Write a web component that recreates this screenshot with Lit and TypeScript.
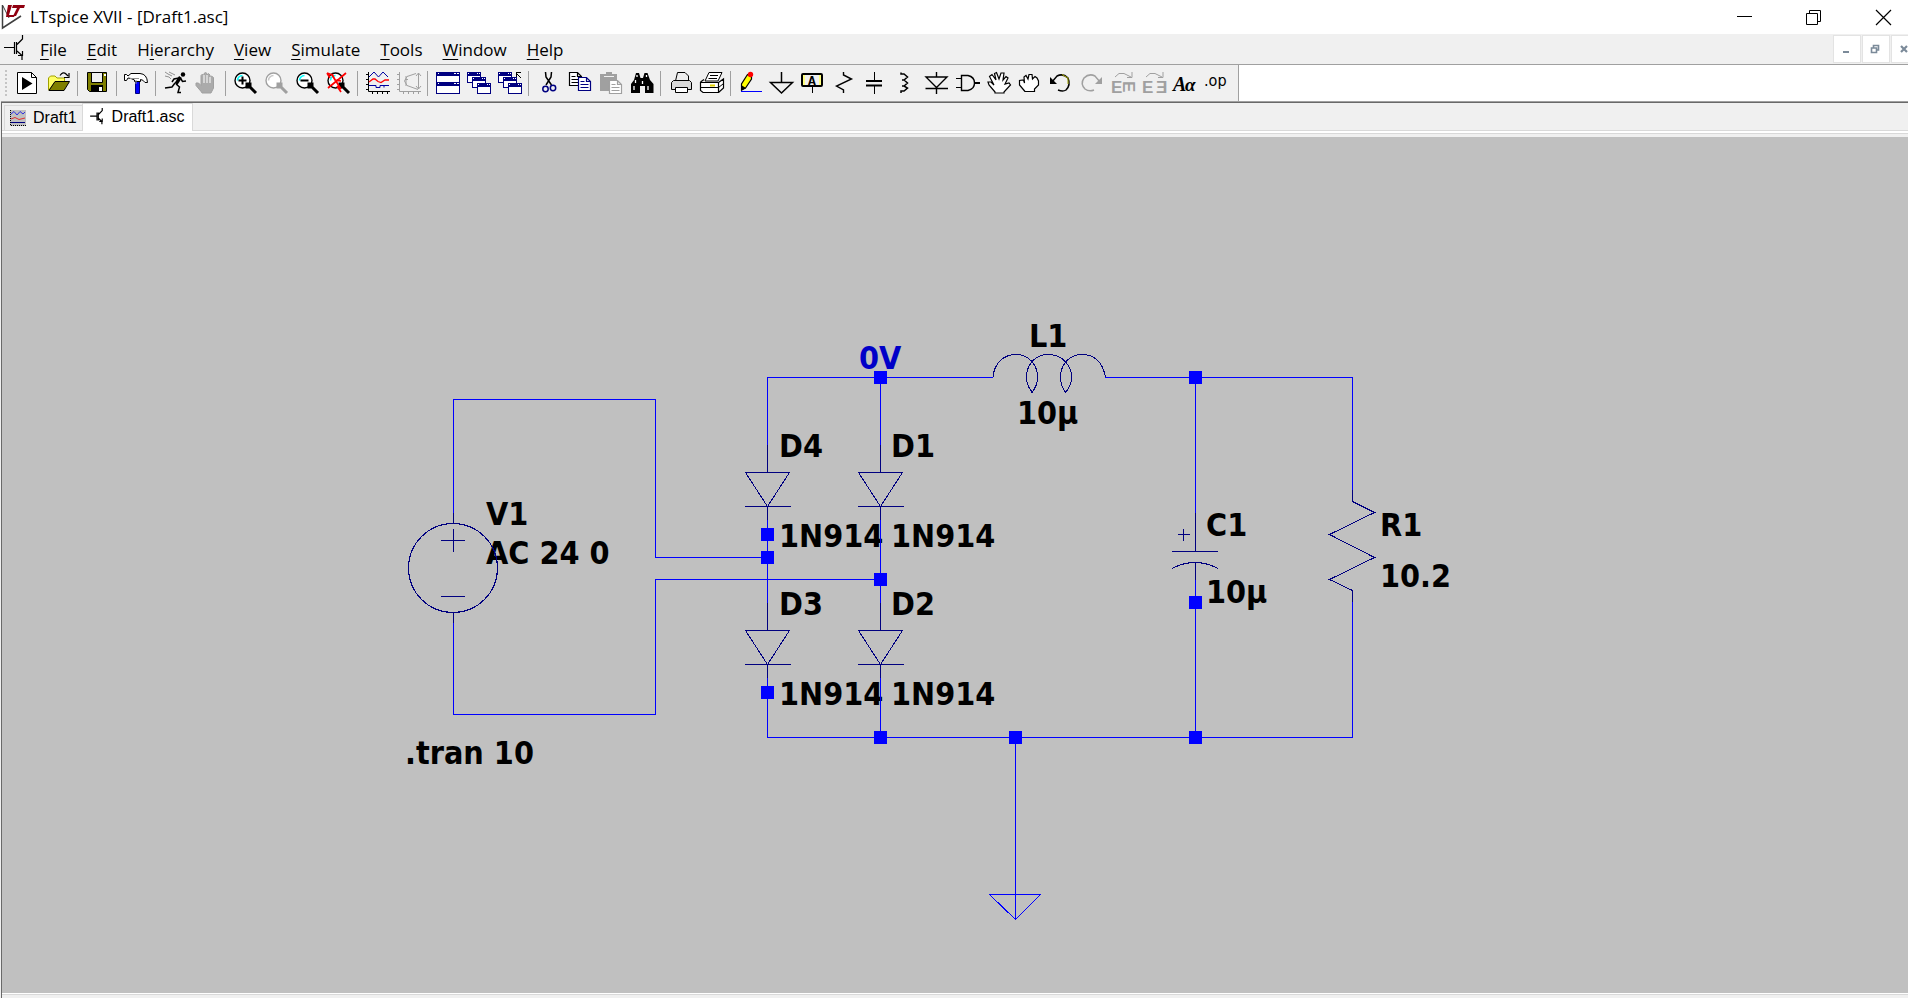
import { LitElement, html, svg, css } from "lit";
import { customElement } from "lit/decorators.js";
import { classMap } from "lit/directives/class-map.js";

type Tool = { label: string; art: unknown; disabled?: boolean };

const lens = (color: string, glint: string, inner: unknown) => svg`
  <circle cx="8.5" cy="8.5" r="7.5" fill="#fff" stroke="${color}" stroke-width="1.4"/>
  <path d="M3.5 8.5A5 5 0 0 1 8.5 3.5" fill="none" stroke="${glint}" stroke-width="1.6"/>
  <path d="M13 12H16V15H13Z M15 14L22 21" fill="none" stroke="${color}" stroke-width="3"/>
  ${inner}`;

const cascade = (extra: unknown) => svg`
  ${[[1, 1], [6, 6], [11, 12]].map(([x, y]) => svg`
    <rect x="${x - 0.5}" y="${y - 0.5}" width="13" height="10" fill="#fff" stroke="#000080"/>
    <rect x="${x}" y="${y}" width="12" height="3" fill="#000080"/>
    <path d="M${x} ${y + 0.5}h1M${x + 9} ${y + 0.5}h1M${x + 11} ${y + 0.5}h1" stroke="#fff"/>`)}
  ${extra}`;

const sheet = (x: number, y: number, color: string) => svg`
  <path d="M${x} ${y}h8l4 4v9h-12z M${x + 8} ${y}v4h4" fill="#fff" stroke="${color}" stroke-width="1.2"/>
  <path d="M${x + 2} ${y + 4}h4M${x + 2} ${y + 7}h8M${x + 2} ${y + 10}h8" stroke="${color}"/>`;

const groups: Tool[][] = [
  [
    { label: "New schematic", art: svg`
      <path d="M1.5 .5H15.5L20.5 5.5V21.5H1.5Z" fill="#fff" stroke="#000"/>
      <path d="M15.5 .5V5.5H20.5" fill="none" stroke="#000"/>
      <path d="M6 5V18L16.5 11.5Z"/>` },
    { label: "Open", art: svg`
      <path d="M1.5 18V6L3.5 4H8L10 6H17.5V10H8L2 18Z" fill="#ffff66" stroke="#a0a000"/>
      <path d="M8 9.5H22.5L17 18.5H2Z" fill="#808000" stroke="#000"/>
      <path d="M13 3.5Q16 -1 19 2L21 4M22 1V5.5H17" fill="none" stroke="#000" stroke-width="1.2"/>` },
  ],
  [{ label: "Save", art: svg`
      <path d="M1.5 .5H20.5V19.5H3.5L1.5 17.5Z" fill="#808000" stroke="#000"/>
      <path d="M5.500 .5H16.500V10.500H5.500Z" fill="#f0f0f0" stroke="#000"/>
      <path d="M5 13H17V20H5Z"/><path d="M13 15H16V19H13Z" fill="#fff"/>
      <path d="M18 2H20V4H18Z" fill="#fff"/>` }],
  [{ label: "Control panel", art: svg`
      <path d="M10.500 8V21.500H14.500V8Z" fill="#0000ff" stroke="#000080"/>
      <path d="M-.5 2.500H1.500L3 4L6 1.500H15Q22 2 22.500 10.500L20 10.500Q18 7.500 15.500 7.500V9.500H9.500V8L6 6.500L3 6L1.500 8.500H-.5Z" fill="#fff" stroke="#000"/>
      <path d="M5 6.500H14M11 8V12" stroke="#909090"/>` }],
  [
    { label: "Run", art: svg`
      <circle cx="19" cy="2.500" r="2.200"/>
      <path d="M16.500 5L12 12" stroke="#000" stroke-width="3.400"/>
      <path d="M15 6L10 7L8 10M17 7L18.500 9.500L22 9M11 11L8 15L1 16M12 12L15.500 15L14 20.500H17" fill="none" stroke="#000" stroke-width="1.500"/>
      <path d="M1 0L4 2L8 4M5 0L11 3M1 4L5 5L7 7" fill="none" stroke="#909090"/>` },
    { label: "Halt", disabled: true, art: svg`
      <path d="M6.500 20L1 13.500V11H3.500L6 13.500V3.500L7.500 2L9 3.500V1.500L10.500 .5L12 1.500V3L13.500 1.500L15 3V5.500L16.500 4L18.500 5.500V16L16 21H7Z" fill="#ababab" stroke="#a0a0a0"/>
      <path d="M9 3V11M12 3V11M15 5V11" stroke="#fff"/>` },
  ],
  [
    { label: "Zoom to rectangle", art: lens("#000", "#00ffff", svg`<path d="M4.500 8.500H12.500M8.500 4.500V12.500" stroke="#000" stroke-width="2"/>`) },
    { label: "Pan", disabled: true, art: lens("#a0a0a0", "#c8c8c8", "") },
    { label: "Zoom back", art: lens("#000", "#00ffff", svg`<path d="M4.500 8.500H12.500" stroke="#000" stroke-width="2"/>`) },
    { label: "Zoom full extents", art: lens("#000", "#00ffff", svg`<path d="M0 1L5 3L14 17M19 1L12 7L1 16M0 1L3 6M10 14L14 20M5 2L8 8L14 9" fill="none" stroke="#ff0000" stroke-width="1.700"/>`) },
  ],
  [
    { label: "Autorange", art: svg`
      <path d="M2.500 0V19.500H24M0 2.500H2M0 7.500H2M0 12.500H2M0 17.500H2M6.500 20V22M11.500 20V22M16.500 20V22M21.500 20V22" fill="none" stroke="#000"/>
      <path d="M3 5L8 0L12.500 5L17 0L22 5" fill="none" stroke="#0000a0"/>
      <path d="M3 10L7 7H9L12 9.500L15 10.500L19 8H23" fill="none" stroke="#ff0000" stroke-width="1.300"/>
      <path d="M3 13.500H10V15.500H14V13.500H18V15.500M18 13.500H23" fill="none" stroke="#0000a0"/>` },
    { label: "Smith chart", disabled: true, art: svg`
      <path d="M2.500 0V19.500H24M0 2.500H2M0 7.500H2M0 12.500H2M0 17.500H2M6.500 20V22M11.500 20V22M16.500 20V22M21.500 20V22" fill="none" stroke="#a0a0a0"/>
      <path d="M19 1.500L10 4.500L7.500 9L10 13.500L21 17.500M21.500 1V17M9 4V14M8 7.500H11M19 4L21.500 1L24 4M19 14L21.500 17L24 14" fill="none" stroke="#a0a0a0"/>` },
  ],
  [
    { label: "Tile windows", art: svg`
      ${[0, 10].map((y) => svg`
        <rect x=".5" y="${y + 0.5}" width="23" height="11" fill="#fff" stroke="#000080"/>
        <rect x="1" y="${y}" width="22" height="4" fill="#000080"/>
        <path d="M2 ${y + 1.5}h1M18 ${y + 1.5}h2M21 ${y + 1.5}h2" stroke="#fff"/>`)}` },
    { label: "Cascade windows", art: cascade("") },
    { label: "Close all windows", art: cascade(svg`<path d="M18 .5H23M18.500 0V5M18 1L23 6" stroke="#000" fill="none"/>`) },
  ],
  [
    { label: "Cut", art: svg`
      <path d="M8.500 0L9 5L14.500 13M14.500 0L14 5L9 13" fill="none" stroke="#000" stroke-width="1.500"/>
      <circle cx="8.500" cy="17" r="2.700" fill="none" stroke="#000080" stroke-width="1.500"/>
      <circle cx="16" cy="16" r="2.700" fill="none" stroke="#000080" stroke-width="1.500"/>` },
    { label: "Copy", art: svg`${sheet(1.5, 0.5, "#000")}${sheet(10.5, 5.5, "#000080")}` },
    { label: "Paste", disabled: true, art: svg`
      <path d="M1 2H7V0H13V2H18V19H1Z" fill="#a0a0a0"/><path d="M5 4.500H15" stroke="#f0f0f0"/>
      ${sheet(10.5, 8.5, "#a0a0a0")}` },
    { label: "Find", art: svg`
      <path d="M6 1H9L10.500 6H13L14.500 1H17.500L20 8L23.500 12V21H15V14H10V21H1V12L4 8Z"/>
      <path d="M7 3V5M16.500 3V5M5.500 8V11M12.500 9V12M4 14V18M18 14V18" stroke="#fff" stroke-width="1.300"/>` },
  ],
  [
    { label: "Print setup", art: svg`
      <path d="M6.500 9L8.500 .5H16L19.500 4V9" fill="#eee" stroke="#000"/>
      <path d="M2.500 10.500L4.500 8.500H20.500L22.500 10.500V17.500H2.500Z" fill="#d8d8d8" stroke="#000"/>
      <path d="M6.500 15.500H18.500V20.500H6.500Z" fill="#fff" stroke="#000"/>` },
    { label: "Print", art: svg`
      <path d="M5 9L9 .5H22L18 9Z" fill="#fff" stroke="#000"/>
      <path d="M10 3.500H18M8.500 6.500H17" stroke="#000"/>
      <path d="M.5 10L4 7.500M.5 10.500H18.500V20.500H3L.5 18.500ZM18.500 10.500L23.500 7V16L18.500 20.500" fill="#fff" stroke="#000" stroke-width="1.200"/>
      <path d="M1 15.500H18.500L23 12" fill="none" stroke="#000"/><path d="M10 13.500H15" stroke="#e0d000" stroke-width="2"/>` },
  ],
  [
    { label: "Wire", art: svg`
      <path d="M2.500 18V12L8.500 2.500L12.500 5V7L6.500 16Z" fill="#ffff00" stroke="#000" stroke-width="1.200"/>
      <path d="M2 13L7 16L2 19Z"/><circle cx="11.500" cy="2.500" r="2.700" fill="#ff0000"/>
      <path d="M2 19.500H23" stroke="#0000ff"/>` },
    { label: "Ground", art: svg`<path d="M11.500 0V11M.5 10.500H22.500L11.500 21Z" fill="none" stroke="#000" stroke-width="1.500"/>` },
    { label: "Label net", art: svg`
      <rect x="1" y="2" width="20" height="12" rx="1" fill="#ffff80" stroke="#000" stroke-width="2"/>
      <rect x="4" y="3" width="14" height="10" fill="#f0f0f0"/>
      <path d="M11.500 15V21" stroke="#000"/>
      <text class="mono" x="7" y="13" font-size="13">A</text>` },
    { label: "Resistor", art: svg`<path d="M11.500 0V3L19.500 7L4.500 14L11.500 18V21" fill="none" stroke="#000" stroke-width="1.400"/>` },
    { label: "Capacitor", art: svg`<path d="M11.500 0V9M11.500 13V22" stroke="#000"/><path d="M3 9H19M3 13.500H19" stroke="#000" stroke-width="2"/>` },
    { label: "Inductor", art: svg`<path d="M7 .5V2H10L13.500 5L10 8H8M10 8L13.500 11L10 14H8M10 14L13.500 16L10 19H7V21" fill="none" stroke="#000" stroke-width="1.500"/>` },
    { label: "Diode", art: svg`<path d="M11.500 0V5M11.500 16V22M1 5H22L11.500 15.500ZM.5 16.500H23" fill="none" stroke="#000" stroke-width="1.400"/>` },
    { label: "Component", art: svg`
      <path d="M5.500 3.500H12Q18.500 5 18.500 11Q18.500 17 12 18.500H5.500Z" fill="none" stroke="#000" stroke-width="1.400"/>
      <path d="M0 6.500H5M0 15.500H5" stroke="#000"/><path d="M18 11H24" stroke="#000" stroke-width="2"/>` },
    { label: "Move", art: svg`
      <path d="M8 20L2 13L1 10L4 10L7 13L2.500 4.500L5 2.500L9 8L7.500 1.500L9.500 .5L12 7L14 1L17 1L16 8L19 4.500L21 6L18 12L22 11L23.500 13L17 20V21H8Z" fill="#fff" stroke="#000" stroke-width="1.200"/>` },
    { label: "Drag", art: svg`
      <path d="M7 19.500L1.500 13V8.500L5.500 8L6.500 11L6 5L8 3.500L10 7L11 2.500H14L14.500 7L17 4.500L19 6L20.500 9V13L16.500 17V19.500Z" fill="#fff" stroke="#000" stroke-width="1.200"/>` },
    { label: "Undo", art: svg`
      <path d="M3 10L8 4Q14 1 19 6Q22 13 17 18Q14 20 9 18" fill="none" stroke="#000" stroke-width="1.500"/>
      <path d="M1 5V12H8Z"/><path d="M13 2.500L19 6V12" fill="none" stroke="#a0a000"/>` },
    { label: "Redo", disabled: true, art: svg`
      <path d="M20 10L15 4Q9 1 4 6Q0 12 5 17Q9 20 14 18" fill="none" stroke="#a0a0a0" stroke-width="1.500"/>
      <path d="M22 5V12H15Z" fill="#a0a0a0"/>` },
    { label: "Rotate", disabled: true, art: svg`
      <path d="M4 5L8 1.500H13L20 5M21 0V5.500H16" fill="none" stroke="#a0a0a0"/>
      <text class="mark" x="0" y="21" font-size="17">E</text>
      <text class="mark" font-size="17" transform="translate(12 9) rotate(90)">E</text>` },
    { label: "Mirror", disabled: true, art: svg`
      <path d="M4 5L8 1.500H13L20 5M21 0V5.500H16" fill="none" stroke="#a0a0a0"/>
      <text class="mark" x="0" y="21" font-size="17">E</text>
      <text class="mark" x="14" y="21" font-size="17">Ǝ</text>` },
    { label: "Text", art: svg`<text class="script" x="0" y="19" font-size="20">A</text><text class="script" x="12" y="19" font-size="19">α</text>` },
    { label: "SPICE directive", art: svg`<text class="directive" x="0" y="14" font-size="16">.op</text>` },
  ],
];

const menus: [string, string, string][] = [
  ["", "F", "ile"], ["", "E", "dit"], ["H", "i", "erarchy"], ["", "V", "iew"],
  ["", "S", "imulate"], ["", "T", "ools"], ["", "W", "indow"], ["", "H", "elp"],
];

const wires = [
  "M453.5 513V399.5H655.5V557.5H767.5",
  "M453.5 623V714.5H655.5V579.5H880.5",
  "M767.5 445V377.5H993M880.5 377V445M767.5 512V603M880.5 512V603",
  "M767.5 677V737.5H1352.5V602M880.5 677V737",
  "M1105 377.5H1352.5V490M1195.5 377V513M1195.5 580V737",
  "M1015.5 737V919M989.5 894.5H1040.5L1015.5 919.5Z",
];

const diode = (x: number, y: number) =>
  `M${x} ${y - 28}V${y}M${x} ${y + 34}V${y + 47}M${x - 22} ${y}H${x + 22}L${x} ${y + 34}ZM${x - 23} ${y + 34}H${x + 23}`;

const parts = [
  "M453.5 513V523M453.5 612V623M441 540.5H465M453.5 529V552M441 596.5H465",
  diode(767.5, 472.5), diode(880.5, 472.5), diode(767.5, 630.5), diode(880.5, 630.5),
  "M993 377.5C994 362 1005 354.500 1016 354.500C1030 354.500 1037.500 366 1037.500 377C1037.500 384 1035 389 1031.500 393",
  "M1033 393C1029 389 1026.500 384 1026.500 377C1026.500 366 1034 354.500 1048 354.500C1063 354.500 1071.500 366 1071.500 377C1071.500 384 1069 389 1065 393",
  "M1066 393C1063 389 1060.500 384 1060.500 377C1060.500 366 1068 354.500 1082 354.500C1094 354.500 1103 362 1105.500 377.500",
  "M1195.5 513V551M1172 551.5H1218M1172 568.5Q1195 556.500 1218 568.5M1195.5 563V580M1178 534.5H1190M1183.5 529V541",
  "M1352.5 490V501.5L1374.5 512.5L1329.5 534.5L1374.5 557.5L1329.5 579.5L1352.5 590.5V602",
];

const nodes = [
  [880, 377], [1195, 377], [767, 534], [767, 557], [880, 579], [1195, 602],
  [767, 692], [880, 737], [1015, 737], [1195, 737],
];

const labels: [number, number, string][] = [
  [486, 525, "V1"], [486, 564, "AC 24 0"], [405, 764, ".tran 10"],
  [779, 457, "D4"], [891, 457, "D1"], [779, 547, "1N914"], [891, 547, "1N914"],
  [779, 615, "D3"], [891, 615, "D2"], [779, 705, "1N914"], [891, 705, "1N914"],
  [1029, 347, "L1"], [1017, 424, "10µ"], [1206, 536, "C1"], [1206, 603, "10µ"],
  [1380, 536, "R1"], [1380, 587, "10.2"],
];

@customElement("lt-schematic")
export class LtSchematic extends LitElement {
  static styles = css`
    :host { display: flex; min-width: 0; background: #c0c0c0; }
    .sheet { flex: 1; display: block; width: 100%; height: 100%; }
    .label { font: bold 32px "DejaVu Sans Condensed", "Noto Sans", sans-serif; fill: #000; }
    .net { fill: #0000c8; }
    .wire { fill: none; stroke: #0000ff; }
    .part { fill: none; stroke: #000080; }
    .node { fill: #0000ff; }
  `;
  render() {
    return html`<svg class="sheet" role="img" aria-label="Bridge rectifier schematic">
      <g transform="translate(-2 -137)" shape-rendering="crispEdges">
        ${labels.map(([x, y, t]) => svg`<text class="label" x="${x}" y="${y}">${t}</text>`)}
        <text class="label net" x="859" y="369">0V</text>
        ${wires.map((d) => svg`<path class="wire" d="${d}"/>`)}
        ${parts.map((d) => svg`<path class="part" d="${d}"/>`)}
        <circle class="part" cx="453" cy="568" r="44.5"/>
        ${nodes.map(([x, y]) => svg`<rect class="node" x="${x - 6}" y="${y - 6}" width="13" height="13"/>`)}
      </g>
    </svg>`;
  }
}

const transistor = (weight: number) => svg`<path d="M0 12.500H10M10.500 7V19M12.500 7V19M13 9.500L17 5.500L18.500 4V0M13 16L18 20.500V25M14 20.500H18.500V16" fill="none" stroke="#000" stroke-width="${weight}"/>`;

@customElement("app-root")
export class AppRoot extends LitElement {
  static styles = css`
    :host {
      display: flex; flex-direction: column; height: 100vh; overflow: hidden;
      background: #f0f0f0; color: #000;
      font: 17px "Open Sans", "Noto Sans", sans-serif;
    }
    button { margin: 0; padding: 0; border: 0; background: none; color: inherit; font: inherit; }
    svg { display: block; overflow: visible; }
    .title { display: flex; height: 34px; background: #fff; align-items: center; }
    .logo { margin: 0 5px 0 2px; }
    .name { flex: 1; font-size: 17px; line-height: 34px; font-weight: normal; margin: 0; }
    .caption { width: 69px; height: 34px; display: grid; place-items: center; }
    .close { width: 48px; margin-left: 12px; padding-right: 2px; }
    .menu { display: flex; height: 30px; border-bottom: 1px solid #a0a0a0; }
    .menu-icon { margin: 1px 5px 0 4px; }
    .items { display: flex; flex: 1; }
    .item { padding: 0 10px; line-height: 31px; }
    .item u { text-underline-offset: 3px; text-decoration-thickness: 1px; }
    .mdi { display: flex; gap: 1px; margin-right: -11px; padding-top: 1px; }
    .mdi button { width: 28px; height: 28px; border: 1px solid #e3e3e3; background: #fff; display: grid; place-items: center; padding-right: 3px; }
    .toolbar { display: flex; height: 36px; background: #fff; }
    .tools { display: flex; background: #f0f0f0; border-right: 1px solid #a0a0a0; padding: 0 6px 0 5px; }
    .grip { width: 2px; margin: 5px 6px 5px 0; background: repeating-linear-gradient(#c4c4c4 0 2px, #f0f0f0 2px 4px); }
    .sep { width: 1px; height: 25px; margin: 6px 5px 0 2px; background: #a0a0a0; }
    .tool { width: 31px; height: 36px; padding: 2px 0 0 3px; }
    .mono { font-family: "Liberation Mono", monospace; font-weight: bold; }
    .directive { font-family: "DejaVu Sans Condensed", sans-serif; }
    .mark { font-family: "Liberation Sans", sans-serif; font-weight: bold; fill: #a0a0a0; }
    .script { font-family: "Liberation Serif", serif; font-weight: bold; font-style: italic; }
    .work { flex: 1; min-height: 0; display: flex; flex-direction: column; border-top: 1px solid #696969; border-left: 1px solid #696969; box-shadow: 0 -1px #a0a0a0; margin: 1px 0 0 1px; }
    .tabs { display: flex; align-items: flex-end; height: 28px; padding-left: 2px; border-bottom: 1px solid #d9d9d9; box-sizing: border-box; }
    .tab { display: flex; align-items: center; height: 25px; padding: 0 5px 0 5px; gap: 7px; border-top: 1px solid #d9d9d9; border-left: 1px solid #d9d9d9; font: 16px "Liberation Sans", sans-serif; }
    .tab.active { height: 28px; margin-bottom: -1px; padding: 0 7px 2px 7px; gap: 8px; background: #fff; border-right: 1px solid #d9d9d9; }
    .band { height: 2px; background: #fff; border-bottom: 1px solid #d9d9d9; margin-bottom: 3px; }
    .canvas { flex: 1; min-height: 0; }
    .foot { height: 3px; flex: none; border-top: 1px solid #fff; box-sizing: border-box; margin-bottom: 2px; background: linear-gradient(#d9d9d9 50%, #f0f0f0 50%); }
  `;

  render() {
    return html`
      <header class="title">
        <svg class="logo" width="23" height="28" viewBox="0 0 23 28">
          <path d="M.5 2V25L19 13" fill="none" stroke="#404040" stroke-width="1.500"/>
          <path d="M1 3L7 15" stroke="#404040"/>
          <path d="M6 2H10L7 12H13L12 14H4ZM11 2H23L22 5H18L14 13H11L15 5H10Z" fill="#900010"/>
        </svg>
        <h1 class="name">LTspice XVII - [Draft1.asc]</h1>
        <button class="caption" aria-label="Minimize"><svg width="15" height="15"><path d="M0 6.500H15" stroke="#000"/></svg></button>
        <button class="caption" aria-label="Restore"><svg width="15" height="15"><path d="M.5 3.500H11.500V14.500H.5ZM3.500 3V.5H14.500V11.500H12" fill="none" stroke="#000"/></svg></button>
        <button class="caption close" aria-label="Close"><svg width="15" height="15"><path d="M0 0L15 15M15 0L0 15" stroke="#000" stroke-width="1.200"/></svg></button>
      </header>
      <nav class="menu" aria-label="Main menu">
        <svg class="menu-icon" width="21" height="26">${transistor(1.2)}</svg>
        <div class="items">
          ${menus.map(([a, k, b]) => html`<button class="item">${a}<u>${k}</u>${b}</button>`)}
        </div>
        <div class="mdi">
          <button aria-label="Minimize document"><svg width="8" height="8"><path d="M1 7H7" stroke="#7b8a99" stroke-width="2"/></svg></button>
          <button aria-label="Restore document"><svg width="8" height="8"><path d="M.5 3H5.500V7.500H.5ZM2.500 3V.5H7.500V5H6" fill="none" stroke="#7b8a99" stroke-width="1.600"/></svg></button>
          <button aria-label="Close document"><svg width="8" height="8"><path d="M1 1L7 7M7 1L1 7" stroke="#7b8a99" stroke-width="2.200"/></svg></button>
        </div>
      </nav>
      <div class="toolbar" role="toolbar" aria-label="Tools">
        <div class="tools">
          <span class="grip"></span>
          ${groups.map((group, i) => html`
            ${i ? html`<span class="sep"></span>` : ""}
            ${group.map((t) => html`<button class="tool" aria-label=${t.label} ?disabled=${!!t.disabled}>
              <svg width="24" height="24">${t.art}</svg></button>`)}`)}
        </div>
      </div>
      <main class="work">
        <div class="tabs" role="tablist">
          ${["Draft1", "Draft1.asc"].map((name, i) => html`
            <button class=${classMap({ tab: true, active: i === 1 })} role="tab" aria-selected=${i === 1}>
              ${i
                ? html`<svg width="14" height="17" viewBox="0 0 21 26">${transistor(1.8)}</svg>`
                : html`<svg width="16" height="16">
                    <rect width="16" height="16" fill="#c0c0c0"/>
                    <path d="M1 4L4 1.500L7 5L10 1.500L13 4L15 2" fill="none" stroke="#3030e0"/>
                    <path d="M1 9L5 7.500L9 9.500L15 8" fill="none" stroke="#e03030"/>
                    <path d="M1 12.500H15" stroke="#000080"/>
                    <path d="M.5 0V15.500H16" fill="none" stroke="#000" stroke-dasharray="1 1"/>
                  </svg>`}
              <span>${name}</span>
            </button>`)}
        </div>
        <div class="band"></div>
        <lt-schematic class="canvas"></lt-schematic>
        <div class="foot"></div>
      </main>`;
  }
}
